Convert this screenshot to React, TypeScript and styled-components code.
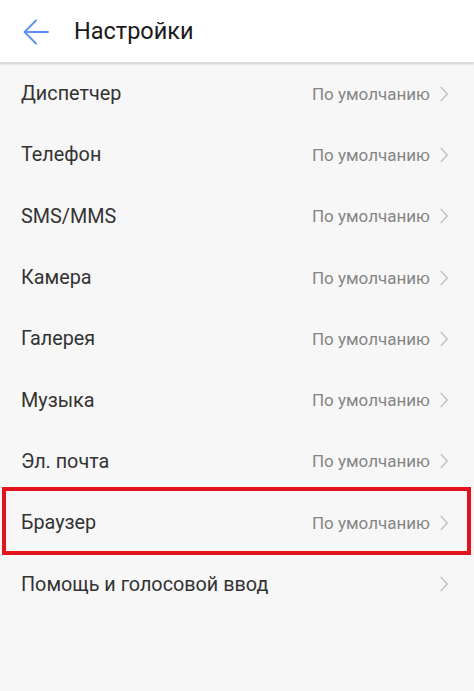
import React from 'react';
import styled, { createGlobalStyle } from 'styled-components';

interface SettingItem {
  id: string;
  label: string;
  value?: string;
  highlighted?: boolean;
}

const items: SettingItem[] = [
  { id: 'dialer', label: 'Диспетчер', value: 'По умолчанию' },
  { id: 'phone', label: 'Телефон', value: 'По умолчанию' },
  { id: 'sms', label: 'SMS/MMS', value: 'По умолчанию' },
  { id: 'camera', label: 'Камера', value: 'По умолчанию' },
  { id: 'gallery', label: 'Галерея', value: 'По умолчанию' },
  { id: 'music', label: 'Музыка', value: 'По умолчанию' },
  { id: 'email', label: 'Эл. почта', value: 'По умолчанию' },
  { id: 'browser', label: 'Браузер', value: 'По умолчанию', highlighted: true },
  { id: 'assist', label: 'Помощь и голосовой ввод' },
];

const GlobalStyle = createGlobalStyle`
  html, body {
    margin: 0;
    padding: 0;
    background: #f7f7f7;
  }
  body {
    font-family: Roboto, "Noto Sans", "Liberation Sans", sans-serif;
  }
`;

const Screen = styled.div`
  width: 474px;
  height: 691px;
  background: #f7f7f7;
  display: flex;
  flex-direction: column;
  overflow: hidden;
`;

const Header = styled.header`
  height: 62px;
  flex-shrink: 0;
  background: #ffffff;
  display: flex;
  align-items: center;
  padding-left: 23px;
  box-shadow: 0 1px 2px rgba(0, 0, 0, 0.18);
  border-bottom: 1px solid #dcdcdc;
  position: relative;
  z-index: 1;
`;

const BackButton = styled.button`
  background: none;
  border: none;
  padding: 0;
  width: 26px;
  height: 26px;
  display: flex;
  align-items: center;
  justify-content: center;
  cursor: pointer;
  margin-top: 2px;
`;

const Title = styled.h1`
  margin: 0 0 0 25px;
  font-size: 23.5px;
  font-weight: 400;
  color: #1a1a1a;
`;

const List = styled.ul`
  list-style: none;
  margin: 0;
  padding: 0;
`;

const Row = styled.li<{ $highlighted?: boolean }>`
  height: 61.3px;
  box-sizing: border-box;
  display: flex;
  align-items: center;
  justify-content: space-between;
  padding: 0 26px 0 21px;
  position: relative;

  ${props => props.$highlighted && `
    &::after {
      content: '';
      position: absolute;
      left: 2px;
      right: 3px;
      top: -5px;
      bottom: -2px;
      border: 4.5px solid #e3131e;
    }
  `}
`;

const Label = styled.span`
  font-size: 19.8px;
  color: #333333;
`;

const Trailing = styled.div`
  display: flex;
  align-items: center;
  gap: 10px;
`;

const Value = styled.span`
  font-size: 17px;
  color: #858585;
`;

const Chevron = () => (
  <svg width="8" height="16" viewBox="0 0 8 16" fill="none">
    <path d="M0.8 1 L7.2 8 L0.8 15" stroke="#c4c4c4" strokeWidth="1.4" strokeLinejoin="miter" />
  </svg>
);

const App: React.FC = () => {
  return (
    <Screen>
      <GlobalStyle />
      <Header>
        <BackButton aria-label="Назад">
          <svg width="26" height="26" viewBox="0 0 26 26" fill="none">
            <path
              d="M25 13 H2 M13 1.5 L1.5 13 L13 24.5"
              stroke="#5b8ff0"
              strokeWidth="1.8"
              strokeLinecap="round"
              strokeLinejoin="round"
            />
          </svg>
        </BackButton>
        <Title>Настройки</Title>
      </Header>
      <List>
        {items.map(item => (
          <Row key={item.id} $highlighted={item.highlighted}>
            <Label>{item.label}</Label>
            <Trailing>
              {item.value && <Value>{item.value}</Value>}
              <Chevron />
            </Trailing>
          </Row>
        ))}
      </List>
    </Screen>
  );
};

export default App;
